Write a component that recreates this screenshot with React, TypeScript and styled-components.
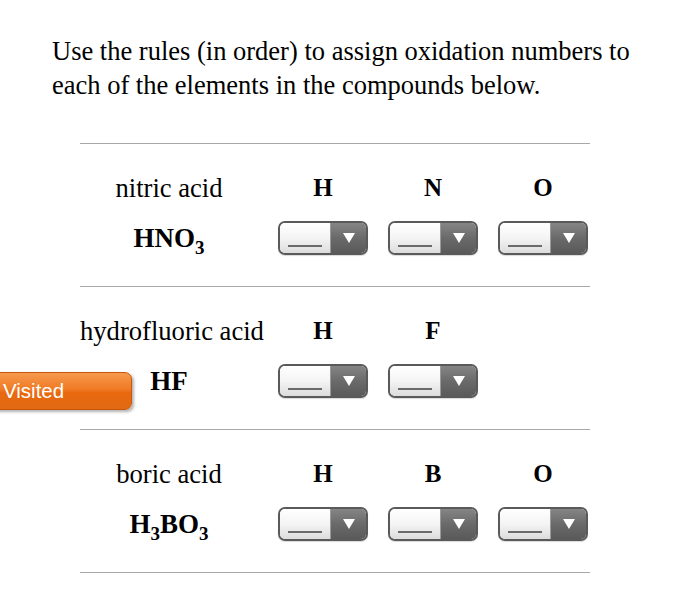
import React from "react";
import styled, { createGlobalStyle } from "styled-components";

const Global = createGlobalStyle`
  html, body { margin: 0; padding: 0; background: #fff; }
  body { font-family: "Liberation Serif", "Times New Roman", serif; color: #000; }
`;

const Page = styled.div`
  position: relative;
  width: 700px;
  height: 605px;
  overflow: hidden;
  padding: 34px 0 0 52px;
  box-sizing: border-box;
`;

const Intro = styled.p`
  margin: 0;
  font-size: 26.5px;
  line-height: 34px;
  width: 610px;
`;

const Table = styled.div`
  margin: 41px 0 0 28px;
  width: 510px;
  border-top: 1.5px solid #a8a8a8;
`;

const Section = styled.div`
  display: grid;
  grid-template-columns: 178px repeat(3, 90px);
  column-gap: 20px;
  grid-template-rows: 30px 34px;
  row-gap: 18px;
  align-items: center;
  padding: 29px 0 31px;
  border-bottom: 1.5px solid #a8a8a8;
`;

const Name = styled.div`
  font-size: 26.6px;
  line-height: 30px;
  text-align: center;
  white-space: nowrap;
`;

const Formula = styled.div`
  font-size: 27px;
  font-weight: bold;
  line-height: 30px;
  text-align: center;
  sub {
    font-size: 19px;
    vertical-align: -7px;
    line-height: 0;
  }
`;

const Element = styled.div`
  font-size: 25px;
  font-weight: bold;
  line-height: 30px;
  text-align: center;
`;

const Select = styled.div`
  display: flex;
  width: 90px;
  height: 34px;
  box-sizing: border-box;
  border: 2px solid #5a5a5a;
  border-radius: 7px;
  overflow: hidden;
  box-shadow: 0 1px 1px rgba(0, 0, 0, 0.15);
`;

const Value = styled.div`
  flex: 1;
  display: flex;
  align-items: flex-end;
  justify-content: center;
  padding-bottom: 6px;
  background: linear-gradient(#ffffff, #f4f4f4 50%, #dcdcdc);
  border-right: 1px solid #9a9a9a;
`;

const Blank = styled.span`
  display: block;
  width: 34px;
  height: 2px;
  background: #6a6a6a;
`;

const Arrow = styled.div`
  width: 35px;
  display: flex;
  align-items: center;
  justify-content: center;
  background: linear-gradient(#858585, #6a6a6a 50%, #5a5a5a);
`;

const Tri = styled.span`
  width: 0;
  height: 0;
  border-left: 6px solid transparent;
  border-right: 6px solid transparent;
  border-top: 10px solid #ffffff;
`;

const Visited = styled.div`
  position: absolute;
  left: -12px;
  top: 372px;
  width: 144px;
  height: 38px;
  box-sizing: border-box;
  border: 1px solid #c9560a;
  border-radius: 7px;
  background: linear-gradient(#f69a4e, #f07a24 45%, #e8680f 55%, #e06a12);
  box-shadow: 2px 2px 3px rgba(0, 0, 0, 0.3);
  color: #fff;
  font-family: "Liberation Sans", Arial, sans-serif;
  font-size: 20.5px;
  line-height: 36px;
  padding-left: 14px;
`;

const Dropdown = () => (
  <Select>
    <Value>
      <Blank />
    </Value>
    <Arrow>
      <Tri />
    </Arrow>
  </Select>
);

type Compound = {
  name: string;
  formula: React.ReactNode;
  elements: string[];
};

const compounds: Compound[] = [
  {
    name: "nitric acid",
    formula: (
      <>
        HNO<sub>3</sub>
      </>
    ),
    elements: ["H", "N", "O"],
  },
  { name: "hydrofluoric acid", formula: <>HF</>, elements: ["H", "F"] },
  {
    name: "boric acid",
    formula: (
      <>
        H<sub>3</sub>BO<sub>3</sub>
      </>
    ),
    elements: ["H", "B", "O"],
  },
];

export default function App() {
  return (
    <Page>
      <Global />
      <Intro>
        Use the rules (in order) to assign oxidation numbers to each of the
        elements in the compounds below.
      </Intro>
      <Table>
        {compounds.map((c) => (
          <Section key={c.name}>
            <Name>{c.name}</Name>
            {[0, 1, 2].map((i) => (
              <Element key={"e" + i}>{c.elements[i] ?? ""}</Element>
            ))}
            <Formula>{c.formula}</Formula>
            {[0, 1, 2].map((i) =>
              c.elements[i] ? <Dropdown key={"d" + i} /> : <div key={"d" + i} />
            )}
          </Section>
        ))}
      </Table>
      <Visited>Visited</Visited>
    </Page>
  );
}
